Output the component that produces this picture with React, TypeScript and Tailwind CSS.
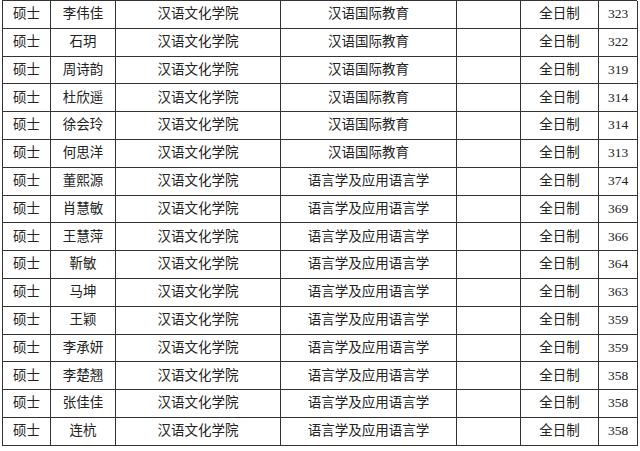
import React from 'react';

const rows: [string, string, string][] = [
    ['李伟佳', '汉语国际教育', '323'],
    ['石玥', '汉语国际教育', '322'],
    ['周诗韵', '汉语国际教育', '319'],
    ['杜欣遥', '汉语国际教育', '314'],
    ['徐会玲', '汉语国际教育', '314'],
    ['何思洋', '汉语国际教育', '313'],
    ['董熙源', '语言学及应用语言学', '374'],
    ['肖慧敏', '语言学及应用语言学', '369'],
    ['王慧萍', '语言学及应用语言学', '366'],
    ['靳敏', '语言学及应用语言学', '364'],
    ['马坤', '语言学及应用语言学', '363'],
    ['王颖', '语言学及应用语言学', '359'],
    ['李承妍', '语言学及应用语言学', '359'],
    ['李楚翘', '语言学及应用语言学', '358'],
    ['张佳佳', '语言学及应用语言学', '358'],
    ['连杭', '语言学及应用语言学', '358'],
];

const cell = 'flex items-center justify-center border-r border-b border-[#333] h-[27.8px]';

export default function App() {
    return (
        <div
            className="w-[640px] h-[451px] bg-white overflow-hidden text-[13.5px] text-[#222]"
            style={{ fontFamily: '"Liberation Serif", "Noto Sans CJK SC", serif' }}
        >
            <div className="ml-[2px] w-[635px] grid grid-cols-[48px_65px_165px_176px_64px_78px_39px] border-t border-l border-[#333]">
                {rows.map(([name, major, score]) => (
                    <React.Fragment key={name + score}>
                        <div className={cell}>硕士</div>
                        <div className={cell}>{name}</div>
                        <div className={cell}>汉语文化学院</div>
                        <div className={cell}>{major}</div>
                        <div className={cell}></div>
                        <div className={cell}>全日制</div>
                        <div className={cell}>{score}</div>
                    </React.Fragment>
                ))}
            </div>
        </div>
    );
}
